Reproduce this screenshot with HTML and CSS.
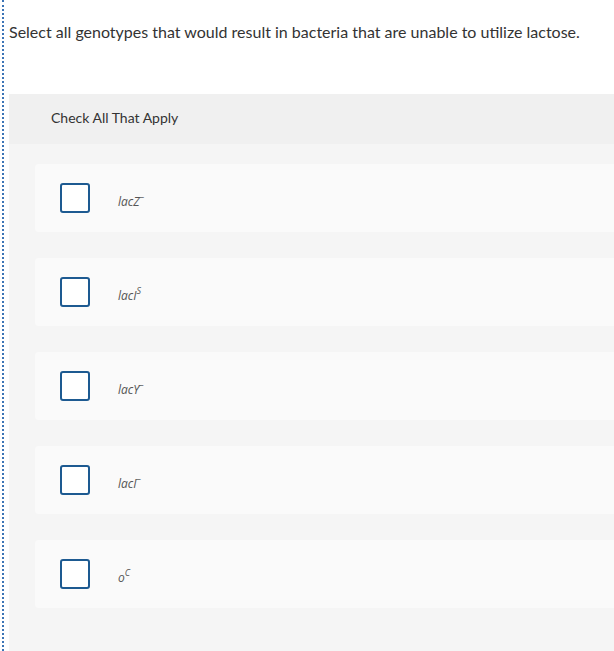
FILE: index.html
```html
<!DOCTYPE html>
<html>
<head>
<meta charset="utf-8">
<link rel="stylesheet" href="styles.css">
</head>
<body>
<div class="frame">
  <p class="question">Select all genotypes that would result in bacteria that are unable to utilize lactose.</p>
  <div class="panel">
    <div class="panel-head">Check All That Apply</div>
    <div class="options">
      <label class="option"><span class="box"></span><span class="label"><i>lacZ</i><sup class="minus">−</sup></span></label>
      <label class="option"><span class="box"></span><span class="label"><i>lacI</i><sup class="up"><i>S</i></sup></span></label>
      <label class="option"><span class="box"></span><span class="label"><i>lacY</i><sup class="minus">−</sup></span></label>
      <label class="option"><span class="box"></span><span class="label"><i>lacI</i><sup class="minus">−</sup></span></label>
      <label class="option"><span class="box"></span><span class="label"><i>o</i><sup class="up"><i>C</i></sup></span></label>
    </div>
  </div>
</div>
</body>
</html>
```
FILE: styles.css
```css
html, body {
  margin: 0;
  padding: 0;
  background: #fff;
  overflow: hidden;
}
body {
  width: 614px;
  height: 651px;
  font-family: "Lato", "Open Sans", sans-serif;
  color: #333;
}
.frame {
  margin-left: 2px;
  border-left: 2px dotted #3b74b6;
  height: 651px;
  padding-left: 5px;
  overflow: hidden;
}
.question {
  margin: 22px 0 0 0;
  font-size: 16px;
  line-height: 20px;
  color: #333;
}
.panel {
  margin-top: 52px;
  background: #f5f5f5;
  height: 600px;
}
.panel-head {
  background: #f0f0f0;
  height: 50px;
  display: flex;
  align-items: center;
  padding-left: 42px;
  padding-bottom: 3px;
  box-sizing: border-box;
  font-size: 14px;
  color: #333;
}
.options {
  padding: 20px 0 0 26px;
  display: flex;
  flex-direction: column;
  gap: 26px;
}
.option {
  display: flex;
  align-items: center;
  height: 68px;
  background: #fafafa;
  border-radius: 4px 0 0 4px;
  padding-left: 25px;
}
.box {
  width: 26px;
  height: 26px;
  border: 2px solid #1d5a91;
  border-radius: 3px;
  background: #fff;
}
.label {
  margin-left: 28px;
  font-family: "Open Sans", "Lato", sans-serif;
  font-size: 12px;
  color: #555;
  margin-top: 6px;
}
.label sup {
  line-height: 0;
}
.label .minus {
  font-size: 10px;
  vertical-align: 5px;
  margin-left: -1px;
}
.label .up {
  font-size: 9px;
  vertical-align: 6px;
}
```
